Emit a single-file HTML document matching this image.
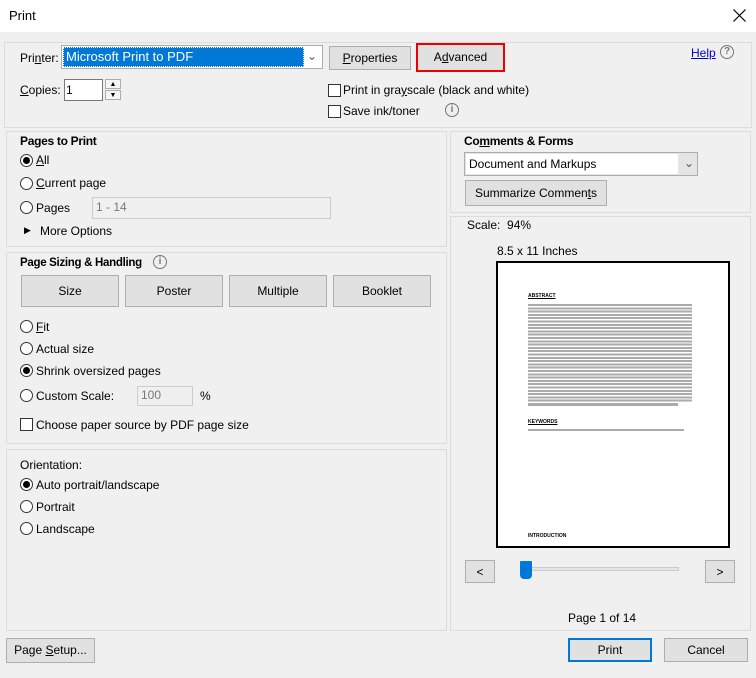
<!DOCTYPE html><html><head><style>
body{margin:0;width:756px;height:678px;background:#f0f0f0;font:12px "Liberation Sans",sans-serif;color:#000;position:relative;overflow:hidden}
div,span{position:absolute;box-sizing:border-box}
.t{white-space:nowrap;line-height:14px}
.pn{border:1px solid #dcdcdc;background:#f0f0f0}
.btn{background:#e1e1e1;border:1px solid #adadad;text-align:center;line-height:22px}
.rb{width:13px;height:13px;border:1px solid #333;border-radius:50%;background:#fff}
.rb.on::after{content:"";position:absolute;left:2px;top:2px;width:7px;height:7px;border-radius:50%;background:#000}
.cb{width:13px;height:13px;border:1px solid #333;background:#fff}
.b{font-weight:bold;letter-spacing:-0.3px}
.in{background:#fff;border:1px solid #7a7a7a}
</style></head><body>
<div style="left:0;top:0;width:756px;height:32px;background:#fff"></div>
<div class="t" style="left:9px;top:9px;font-size:13px">Print</div>
<svg style="position:absolute;left:733px;top:9px" width="13" height="13"><path d="M0.5 0.5L12.5 12.5M12.5 0.5L0.5 12.5" stroke="#000" stroke-width="1.2"/></svg>

<div class="pn" style="left:4px;top:42px;width:748px;height:86px"></div>
<div class="t" style="left:20px;top:51px">Pri<u>n</u>ter:</div>
<div class="in" style="left:61px;top:45px;width:262px;height:24px;border-color:#adadad;background:#fff"></div>
<div style="left:63px;top:47px;width:241px;height:20px;background:#0078d7;border:1px dotted #fff"></div>
<div class="t" style="left:66px;top:50px;color:#fff;font-size:13px">Microsoft Print to PDF</div>
<div class="t" style="left:307px;top:49px;color:#555">⌄</div>
<div class="btn" style="left:329px;top:46px;width:82px;height:24px"><u>P</u>roperties</div>
<div class="btn" style="left:416px;top:43px;width:89px;height:29px;border:2px solid #e00;line-height:25px">A<u>d</u>vanced</div>
<div class="t" style="left:691px;top:46px;color:#00c;text-decoration:underline">Help</div>
<div style="left:720px;top:45px;width:14px;height:14px;border:1.5px solid #777;border-radius:50%;color:#777;font-size:10px;text-align:center;line-height:11px;font-weight:bold">?</div>
<div class="t" style="left:20px;top:83px"><u>C</u>opies:</div>
<div class="in" style="left:64px;top:79px;width:39px;height:22px"></div>
<div class="t" style="left:66px;top:83px">1</div>
<div style="left:105px;top:79px;width:16px;height:10px;border:1px solid #adadad;background:#f5f5f5;font-size:7px;text-align:center;line-height:9px">▲</div>
<div style="left:105px;top:90px;width:16px;height:10px;border:1px solid #adadad;background:#f5f5f5;font-size:7px;text-align:center;line-height:9px">▼</div>
<div class="cb" style="left:328px;top:84px"></div>
<div class="t" style="left:343px;top:83px">Print in gra<u>y</u>scale (black and white)</div>
<div class="cb" style="left:328px;top:105px"></div>
<div class="t" style="left:343px;top:104px">Save ink/toner</div>
<div style="left:445px;top:103px;width:14px;height:14px;border:1.5px solid #777;border-radius:50%;color:#777;font-size:10px;text-align:center;line-height:11px;font-weight:bold">i</div>

<div class="pn" style="left:6px;top:131px;width:441px;height:116px"></div>
<div class="t b" style="left:20px;top:134px">Pages to Print</div>
<div class="rb on" style="left:20px;top:154px"></div><div class="t" style="left:36px;top:153px"><u>A</u>ll</div>
<div class="rb" style="left:20px;top:177px"></div><div class="t" style="left:36px;top:176px"><u>C</u>urrent page</div>
<div class="rb" style="left:20px;top:201px"></div><div class="t" style="left:36px;top:201px">Pa<u>g</u>es</div>
<div style="left:92px;top:197px;width:239px;height:22px;border:1px solid #ccc;background:#f0f0f0"></div>
<div class="t" style="left:96px;top:200px;color:#777">1 - 14</div>
<div class="t" style="left:24px;top:223px;font-size:9px">▶</div>
<div class="t" style="left:40px;top:224px">More Options</div>

<div class="pn" style="left:6px;top:252px;width:441px;height:192px"></div>
<div class="t b" style="left:20px;top:256px;font-size:11.5px">Page Sizing &amp; Handling</div>
<div style="left:153px;top:255px;width:14px;height:14px;border:1.5px solid #777;border-radius:50%;color:#777;font-size:10px;text-align:center;line-height:11px;font-weight:bold">i</div>
<div class="btn" style="left:21px;top:275px;width:98px;height:32px;line-height:30px">Size</div>
<div class="btn" style="left:125px;top:275px;width:98px;height:32px;line-height:30px">Poster</div>
<div class="btn" style="left:229px;top:275px;width:98px;height:32px;line-height:30px">Multiple</div>
<div class="btn" style="left:333px;top:275px;width:98px;height:32px;line-height:30px">Booklet</div>
<div class="rb" style="left:20px;top:320px"></div><div class="t" style="left:36px;top:320px"><u>F</u>it</div>
<div class="rb" style="left:20px;top:342px"></div><div class="t" style="left:36px;top:342px">Actual size</div>
<div class="rb on" style="left:20px;top:364px"></div><div class="t" style="left:36px;top:364px">Shrink oversized pages</div>
<div class="rb" style="left:20px;top:389px"></div><div class="t" style="left:36px;top:389px">Custom Scale:</div>
<div style="left:137px;top:386px;width:56px;height:20px;border:1px solid #ccc"></div>
<div class="t" style="left:141px;top:388px;color:#777">100</div>
<div class="t" style="left:200px;top:389px">%</div>
<div class="cb" style="left:20px;top:418px"></div><div class="t" style="left:36px;top:418px">Choose paper source by PDF page size</div>

<div class="pn" style="left:6px;top:449px;width:441px;height:182px"></div>
<div class="t" style="left:20px;top:458px">Orientation:</div>
<div class="rb on" style="left:20px;top:478px"></div><div class="t" style="left:36px;top:478px">Auto portrait/landscape</div>
<div class="rb" style="left:20px;top:500px"></div><div class="t" style="left:36px;top:500px">Portrait</div>
<div class="rb" style="left:20px;top:522px"></div><div class="t" style="left:36px;top:522px">Landscape</div>

<div class="pn" style="left:450px;top:131px;width:301px;height:82px"></div>
<div class="t b" style="left:464px;top:134px">Co<u>m</u>ments &amp; Forms</div>
<div style="left:464px;top:152px;width:234px;height:24px;border:1px solid #adadad;background:#e5e5e5"></div>
<div style="left:466px;top:154px;width:212px;height:20px;background:#fff"></div>
<div class="t" style="left:469px;top:157px">Document and Markups</div>
<div class="t" style="left:684px;top:156px;color:#555">⌄</div>
<div class="btn" style="left:465px;top:180px;width:142px;height:26px;line-height:24px">Summarize Commen<u>t</u>s</div>

<div class="pn" style="left:450px;top:216px;width:301px;height:415px"></div>
<div class="t" style="left:467px;top:218px">Scale:&nbsp; 94%</div>
<div class="t" style="left:497px;top:244px">8.5 x 11 Inches</div>
<div style="left:496px;top:261px;width:234px;height:287px;border:2px solid #000;background:#fff">
<div class="t" style="left:30px;top:30px;font-size:5px;font-weight:bold;text-decoration:underline;line-height:6px">ABSTRACT</div>
<div style="left:30px;top:40px;width:164px;height:100px;background:repeating-linear-gradient(#fff 0,#fff 1px,#aaa 1px,#aaa 3px,#fff 3px,#fff 3.3px)"></div>
<div style="left:30px;top:140px;width:150px;height:3px;background:#aaa"></div>
<div class="t" style="left:30px;top:156px;font-size:5px;font-weight:bold;text-decoration:underline;line-height:6px">KEYWORDS</div>
<div style="left:30px;top:166px;width:156px;height:2px;background:#aaa"></div>
<div class="t" style="left:30px;top:270px;font-size:5px;font-weight:bold;line-height:6px">INTRODUCTION</div>
</div>
<div class="btn" style="left:465px;top:560px;width:30px;height:23px">&lt;</div>
<div class="btn" style="left:705px;top:560px;width:30px;height:23px">&gt;</div>
<div style="left:522px;top:567px;width:157px;height:4px;background:#e6e6e6;border:1px solid #ccc"></div>
<div style="left:520px;top:561px;width:12px;height:18px;background:#0078d7;border-radius:1px 1px 4px 4px"></div>
<div class="t" style="left:568px;top:611px">Page 1 of 14</div>

<div class="btn" style="left:6px;top:638px;width:89px;height:25px">Page <u>S</u>etup...</div>
<div class="btn" style="left:568px;top:638px;width:84px;height:24px;border:2px solid #0078d7;line-height:20px">Print</div>
<div class="btn" style="left:664px;top:638px;width:84px;height:24px">Cancel</div>
</body></html>
